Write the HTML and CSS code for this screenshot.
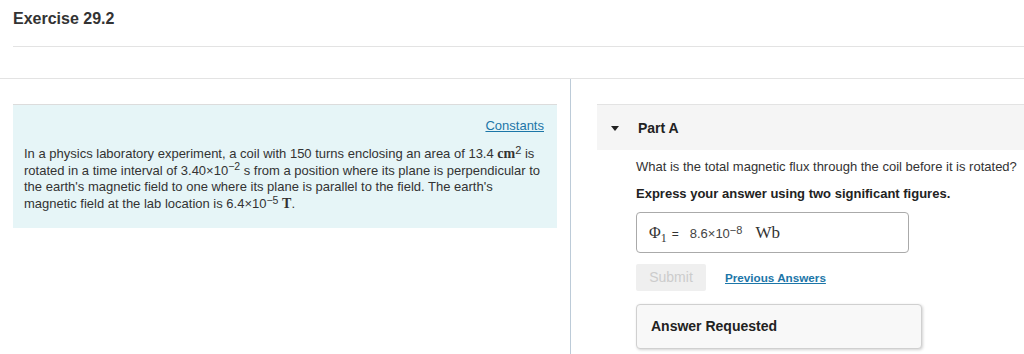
FILE: index.html
```html
<!DOCTYPE html>
<html>
<head>
	<title>Exercise 29.2</title>
	<meta charset="utf-8"/>
	<link rel="stylesheet" href="styles.css">
</head>
<body>
	<div class="head">
		<h1 class="title">Exercise 29.2</h1>
	</div>
	<div class="band"></div>
	<div class="main">
		<div class="left">
			<div class="intro">
				<div class="const"><a href="#">Constants</a></div>
				<p class="problem">In a physics laboratory experiment, a coil with 150 turns enclosing an area of 13.4 <span class="m">cm<sup>2</sup></span> is<br>
				rotated in a time interval of 3.40&times;10<sup>&minus;2</sup> s from a position where its plane is perpendicular to<br>
				the earth's magnetic field to one where its plane is parallel to the field. The earth's<br>
				magnetic field at the lab location is 6.4&times;10<sup>&minus;5</sup> <span class="m">T</span>.</p>
			</div>
		</div>
		<div class="right">
			<div class="part">
				<span class="arrow"></span>
				<span class="partname">Part A</span>
			</div>
			<div class="body">
				<p class="question">What is the total magnetic flux through the coil before it is rotated?</p>
				<p class="hint">Express your answer using two significant figures.</p>
				<div class="answer">
					<span class="m sym">&Phi;<sub>1</sub></span>
					<span class="eq">=</span>
					<span class="val">8.6&times;10<sup>&minus;8</sup></span>
					<span class="m unit">Wb</span>
				</div>
				<div class="actions">
					<span class="submit">Submit</span>
					<a href="#" class="prev">Previous Answers</a>
				</div>
				<div class="requested">Answer Requested</div>
			</div>
		</div>
	</div>
</body>
</html>
```

FILE: styles.css
```css
body{
	margin: 0;
	font-family: "Liberation Sans", Arial, sans-serif;
	color: #333;
	background: #fff;
	height: 354px;
	overflow: hidden;
}
.head{
	padding-left: 13px;
}
.title{
	margin: 0;
	font-size: 16px;
	line-height: 20px;
	padding: 9px 0 17px 0;
	color: #333;
	border-bottom: 1px solid #e3e3e3;
}
.band{
	height: 31px;
	border-bottom: 1px solid #e3e3e3;
}
.main{
	display: flex;
	height: 275px;
}
.left{
	width: 544px;
	padding: 25px 13px 0 13px;
	border-right: 1px solid #bccbd8;
}
.intro{
	background-color: #e6f5f7;
	border-top: 1px solid #dcdcdc;
	padding: 13px 13px 16px 11px;
}
.const{
	text-align: right;
	font-size: 13px;
	line-height: 16px;
}
.const a{
	color: #1c76a8;
}
.problem{
	margin: 12px 0 0 0;
	font-size: 13px;
	line-height: 16.6px;
	color: #333;
	white-space: nowrap;
}
sup{
	font-size: 10.5px;
	line-height: 0;
	vertical-align: baseline;
	position: relative;
	top: -0.4em;
}
.m{
	font-family: "Liberation Serif", "Times New Roman", serif;
	font-size: 14px;
	font-weight: bold;
}
.m sup{
	font-family: "Liberation Sans", Arial, sans-serif;
	font-size: 11px;
	font-weight: normal;
}
.right{
	flex: 1;
	padding: 25px 0 0 26px;
}
.part{
	display: flex;
	align-items: center;
	height: 45px;
	background-color: #f5f5f5;
	border-top: 1px solid #e3e3e3;
}
.arrow{
	width: 0;
	height: 0;
	border-left: 4.5px solid transparent;
	border-right: 4.5px solid transparent;
	border-top: 5px solid #222;
	margin: 2px 0 0 14px;
}
.partname{
	margin-left: 19px;
	font-size: 14px;
	font-weight: bold;
	color: #222;
}
.body{
	padding-left: 39px;
}
.question{
	margin: 9px 0 0 0;
	font-size: 13px;
	line-height: 16px;
}
.hint{
	margin: 11px 0 0 0;
	font-size: 13px;
	line-height: 16px;
	font-weight: bold;
	color: #222;
}
.answer{
	display: flex;
	align-items: baseline;
	width: 271px;
	height: 39px;
	margin-top: 10px;
	border: 1px solid #aaa;
	border-radius: 4px;
	line-height: 39px;
}
.sym{
	margin-left: 12px;
	font-size: 16px;
	font-weight: normal;
}
.sym sub{
	font-size: 12px;
	line-height: 0;
}
.eq{
	margin-left: 5px;
	font-size: 12px;
}
.val{
	margin-left: 11px;
	font-size: 13px;
	color: #444;
}
.val sup{
	font-size: 11px;
}
.unit{
	margin-left: 13px;
	font-size: 17px;
	font-weight: normal;
	color: #333;
}
.actions{
	display: flex;
	align-items: center;
	margin-top: 11px;
}
.submit{
	display: block;
	width: 70px;
	height: 27px;
	line-height: 27px;
	text-align: center;
	font-size: 14px;
	color: #ccc;
	background-color: #efefef;
	border-radius: 2px;
}
.prev{
	margin-left: 19px;
	font-size: 11.7px;
	font-weight: bold;
	color: #1c76a8;
}
.requested{
	width: 270px;
	height: 43px;
	line-height: 43px;
	margin-top: 13px;
	padding-left: 14px;
	font-size: 14px;
	font-weight: bold;
	color: #222;
	background-color: #f8f8f8;
	border: 1px solid #d0d0d0;
	border-radius: 4px;
	box-shadow: 1px 1px 3px rgba(0,0,0,0.18);
}
```
